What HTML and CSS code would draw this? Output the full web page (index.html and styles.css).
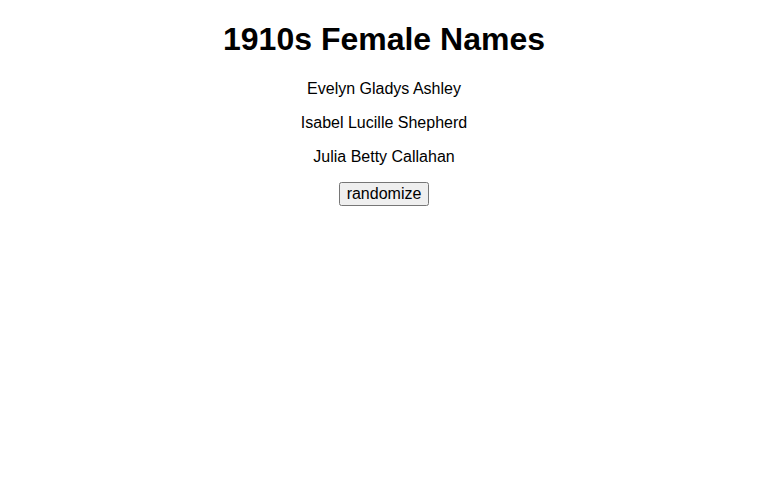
FILE: index.html
```html
<!DOCTYPE html>
<html>
<head>
<meta charset="utf-8">
<title>1910s Female Names</title>
<link rel="stylesheet" href="styles.css">
</head>
<body>
<div class="app">
  <h1 class="title">1910s Female Names</h1>
  <p class="name">Evelyn Gladys Ashley</p>
  <p class="name">Isabel Lucille Shepherd</p>
  <p class="name">Julia Betty Callahan</p>
  <button class="btn" type="button">randomize</button>
</div>
</body>
</html>
```
FILE: styles.css
```css
body {
  margin: 0 8px;
  font-family: "Liberation Sans", Arial, sans-serif;
  background: #fff;
  color: #000;
}
.app {
  text-align: center;
}
.title {
  font-size: 32px;
  font-weight: bold;
  margin: 21.44px 0;
}
.name {
  font-size: 16px;
  margin: 16px 0;
}
.btn {
  font-family: "Liberation Sans", Arial, sans-serif;
  font-size: 16px;
}
```
